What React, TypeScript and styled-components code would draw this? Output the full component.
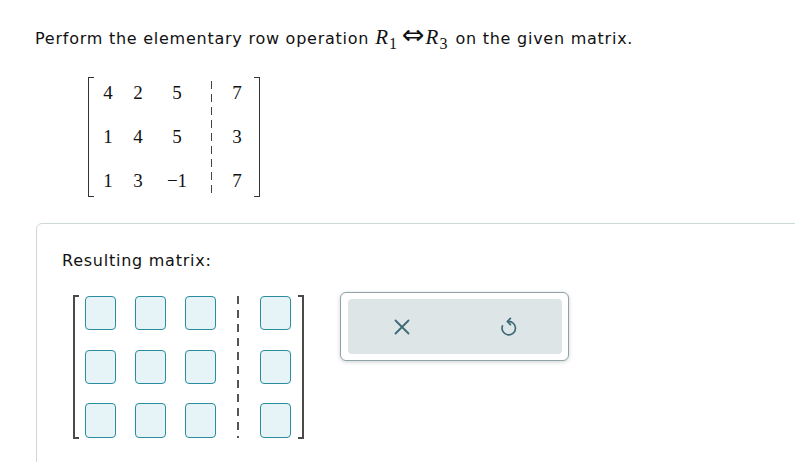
import React from 'react'
import styled, { createGlobalStyle } from 'styled-components'

const GlobalStyle = createGlobalStyle`
  html, body {
    margin: 0;
    padding: 0;
    background: #fff;
    overflow: hidden;
  }
  body {
    font-family: 'DejaVu Sans', Verdana, sans-serif;
    color: #111;
  }
`

const Page = styled.div`
  padding: 24px 0 0 35px;
  width: 795px;
  height: 462px;
  box-sizing: border-box;
  overflow: hidden;
`

const Prompt = styled.div`
  font-size: 16px;
  letter-spacing: 0.75px;
  line-height: 22px;
  white-space: nowrap;
  display: flex;
  align-items: baseline;
`

const MathVar = styled.span<{ $gap?: number }>`
  font-family: 'Liberation Serif', 'Times New Roman', serif;
  font-style: italic;
  font-size: 21px;
  letter-spacing: 0;
  margin-left: ${(p) => p.$gap ?? 6}px;
`

const Sub = styled.sub`
  font-family: 'Liberation Serif', 'Times New Roman', serif;
  font-style: normal;
  font-size: 16px;
  vertical-align: -5px;
  margin-left: 1px;
`

const Arrow = styled.span`
  font-family: 'DejaVu Sans', sans-serif;
  font-size: 27px;
  line-height: 22px;
  letter-spacing: 0;
  margin-left: 5px;
`

const PromptRest = styled.span`
  margin-left: 8px;
`

/* ---------- given matrix ---------- */

const GivenWrap = styled.div`
  display: flex;
  margin: 22px 0 0 53px;
  height: 120px;
`

const Side = styled.div<{ $right?: boolean; $w?: number; $color?: string; $thick?: number }>`
  box-sizing: border-box;
  width: ${(p) => p.$w ?? 6}px;
  border: ${(p) => p.$thick ?? 1}px solid ${(p) => p.$color ?? '#333'};
  ${(p) => (p.$right ? 'border-left: none;' : 'border-right: none;')}
  align-self: stretch;
`

const GivenGrid = styled.div`
  display: grid;
  grid-template-columns: 28px 32px 46px 22px 30px;
  grid-template-rows: repeat(3, 44px);
  align-content: center;
  padding: 0 2px 0 0;
  font-family: 'Liberation Serif', 'Times New Roman', serif;
  font-size: 19px;
`

const Cell = styled.div`
  display: flex;
  align-items: center;
  justify-content: center;
`

const DashCol = styled.div`
  grid-column: 4;
  grid-row: 1 / span 3;
  display: flex;
  justify-content: center;
  padding: 10px 0 8px;
`

const Dash = styled.div<{ $dash: number; $gap: number; $color: string; $w: number }>`
  width: ${(p) => p.$w}px;
  background: repeating-linear-gradient(
    to bottom,
    ${(p) => p.$color} 0 ${(p) => p.$dash}px,
    transparent ${(p) => p.$dash}px ${(p) => p.$dash + p.$gap}px
  );
`

/* ---------- answer panel ---------- */

const Panel = styled.div`
  margin: 26px -40px 0 1px;
  border: 1px solid #cdd8d8;
  border-radius: 6px;
  padding: 27px 0 40px 25px;
  height: 260px;
`

const Label = styled.div`
  font-size: 16px;
  letter-spacing: 0.75px;
  line-height: 20px;
`

const AnswerRow = styled.div`
  display: flex;
  align-items: flex-start;
  gap: 36px;
  margin: 21px 0 0 11px;
`

const AnswerMatrix = styled.div`
  display: flex;
  margin-top: 3px;
  height: 144px;
`

const BoxGrid = styled.div`
  display: grid;
  grid-template-columns: 31px 31px 31px 6px 31px;
  grid-template-rows: 34px 34px 35px;
  column-gap: 19px;
  row-gap: 19.5px;
  padding: 1px 7px 0 6px;
`

const InputBox = styled.div<{ $col: number }>`
  grid-column: ${(p) => p.$col};
  border: 1.5px solid #2a8c9c;
  border-radius: 4px;
  background: #e6f4f8;
  box-sizing: border-box;
`

const AnswerDash = styled.div`
  grid-column: 4;
  grid-row: 1 / span 3;
  display: flex;
  justify-content: center;
`

const ToolGroup = styled.div`
  width: 229px;
  height: 69px;
  box-sizing: border-box;
  border: 1px solid #8ea2a9;
  border-radius: 6px;
  padding: 6px 6px 6px 7px;
  box-shadow: 0 1px 4px rgba(0, 0, 0, 0.18);
  background: #fff;
`

const ToolInner = styled.div`
  display: flex;
  height: 100%;
  background: #dde5e7;
  border-radius: 4px;
`

const ToolButton = styled.button`
  flex: 1;
  border: none;
  background: transparent;
  display: flex;
  align-items: center;
  justify-content: center;
  padding: 0;
  color: #3d6a77;
  cursor: pointer;
`

const given = [
  ['4', '2', '5', '7'],
  ['1', '4', '5', '3'],
  ['1', '3', '\u22121', '7'],
]

function CloseIcon() {
  return (
    <svg width="16" height="16" viewBox="0 0 16 16" fill="none">
      <path d="M1.5 1.5 L14.5 14.5 M14.5 1.5 L1.5 14.5" stroke="currentColor" strokeWidth="1.8" strokeLinecap="round" />
    </svg>
  )
}

function UndoIcon() {
  return (
    <svg width="18" height="20" viewBox="0 0 18 20" fill="none">
      <path
        d="M8 4.5 A 6.7 6.7 0 1 1 2.5 8.8"
        stroke="currentColor"
        strokeWidth="1.7"
        strokeLinecap="round"
      />
      <path d="M10.4 1.4 L7.3 4.5 L10.4 7.6" stroke="currentColor" strokeWidth="1.7" strokeLinecap="round" strokeLinejoin="round" />
    </svg>
  )
}

export default function App() {
  return (
    <Page>
      <GlobalStyle />
      <Prompt>
        Perform the elementary row operation
        <MathVar>
          R<Sub>1</Sub>
        </MathVar>
        <Arrow>⇔</Arrow>
        <MathVar $gap={1}>
          R<Sub>3</Sub>
        </MathVar>
        <PromptRest>on the given matrix.</PromptRest>
      </Prompt>

      <GivenWrap>
        <Side />
        <GivenGrid>
          {given.map((row, r) =>
            row.map((v, c) => (
              <Cell
                key={`${r}-${c}`}
                style={{ gridRow: r + 1, gridColumn: c < 3 ? c + 1 : 5 }}
              >
                {v}
              </Cell>
            ))
          )}
          <DashCol>
            <Dash $dash={8} $gap={5} $color="#444" $w={1} />
          </DashCol>
        </GivenGrid>
        <Side $right />
      </GivenWrap>

      <Panel>
        <Label>Resulting matrix:</Label>
        <AnswerRow>
          <AnswerMatrix>
            <Side $w={6} $thick={2} $color="#4a4a4a" />
            <BoxGrid>
              {[0, 1, 2].map((r) =>
                [1, 2, 3, 5].map((c) => (
                  <InputBox key={`${r}-${c}`} $col={c} style={{ gridRow: r + 1 }} />
                ))
              )}
              <AnswerDash>
                <Dash $dash={8} $gap={6} $color="#555" $w={2} />
              </AnswerDash>
            </BoxGrid>
            <Side $right $w={6} $thick={2} $color="#4a4a4a" />
          </AnswerMatrix>
          <ToolGroup>
            <ToolInner>
              <ToolButton aria-label="Clear">
                <CloseIcon />
              </ToolButton>
              <ToolButton aria-label="Undo">
                <UndoIcon />
              </ToolButton>
            </ToolInner>
          </ToolGroup>
        </AnswerRow>
      </Panel>
    </Page>
  )
}
